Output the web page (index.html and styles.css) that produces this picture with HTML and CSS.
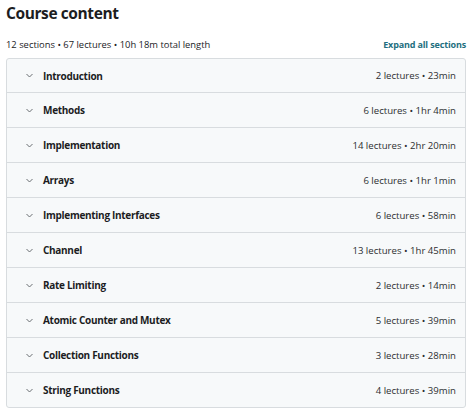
FILE: index.html
```html
<!DOCTYPE html>
<html>
<head>
<meta charset="utf-8">
<link rel="stylesheet" href="styles.css">
</head>
<body>
<div class="page">
  <h2 class="title">Course content</h2>
  <div class="meta">
    <span class="stats">12 sections • 67 lectures • 10h 18m total length</span>
    <span class="expand">Expand all sections</span>
  </div>
  <div class="sections">
    <div class="row"><span class="chev"><svg width="7" height="5" viewBox="0 0 7 5"><path d="M0.5 1 L3.5 4 L6.5 1" fill="none" stroke="#6a6f73" stroke-width="1"/></svg></span><span class="name">Introduction</span><span class="info">2 lectures • 23min</span></div>
    <div class="row"><span class="chev"><svg width="7" height="5" viewBox="0 0 7 5"><path d="M0.5 1 L3.5 4 L6.5 1" fill="none" stroke="#6a6f73" stroke-width="1"/></svg></span><span class="name">Methods</span><span class="info">6 lectures • 1hr 4min</span></div>
    <div class="row"><span class="chev"><svg width="7" height="5" viewBox="0 0 7 5"><path d="M0.5 1 L3.5 4 L6.5 1" fill="none" stroke="#6a6f73" stroke-width="1"/></svg></span><span class="name">Implementation</span><span class="info">14 lectures • 2hr 20min</span></div>
    <div class="row"><span class="chev"><svg width="7" height="5" viewBox="0 0 7 5"><path d="M0.5 1 L3.5 4 L6.5 1" fill="none" stroke="#6a6f73" stroke-width="1"/></svg></span><span class="name">Arrays</span><span class="info">6 lectures • 1hr 1min</span></div>
    <div class="row"><span class="chev"><svg width="7" height="5" viewBox="0 0 7 5"><path d="M0.5 1 L3.5 4 L6.5 1" fill="none" stroke="#6a6f73" stroke-width="1"/></svg></span><span class="name">Implementing Interfaces</span><span class="info">6 lectures • 58min</span></div>
    <div class="row"><span class="chev"><svg width="7" height="5" viewBox="0 0 7 5"><path d="M0.5 1 L3.5 4 L6.5 1" fill="none" stroke="#6a6f73" stroke-width="1"/></svg></span><span class="name">Channel</span><span class="info">13 lectures • 1hr 45min</span></div>
    <div class="row"><span class="chev"><svg width="7" height="5" viewBox="0 0 7 5"><path d="M0.5 1 L3.5 4 L6.5 1" fill="none" stroke="#6a6f73" stroke-width="1"/></svg></span><span class="name">Rate Limiting</span><span class="info">2 lectures • 14min</span></div>
    <div class="row"><span class="chev"><svg width="7" height="5" viewBox="0 0 7 5"><path d="M0.5 1 L3.5 4 L6.5 1" fill="none" stroke="#6a6f73" stroke-width="1"/></svg></span><span class="name">Atomic Counter and Mutex</span><span class="info">5 lectures • 39min</span></div>
    <div class="row"><span class="chev"><svg width="7" height="5" viewBox="0 0 7 5"><path d="M0.5 1 L3.5 4 L6.5 1" fill="none" stroke="#6a6f73" stroke-width="1"/></svg></span><span class="name">Collection Functions</span><span class="info">3 lectures • 28min</span></div>
    <div class="row"><span class="chev"><svg width="7" height="5" viewBox="0 0 7 5"><path d="M0.5 1 L3.5 4 L6.5 1" fill="none" stroke="#6a6f73" stroke-width="1"/></svg></span><span class="name">String Functions</span><span class="info">4 lectures • 39min</span></div>
  </div>
</div>
</body>
</html>
```
FILE: styles.css
```css
html, body {
  margin: 0;
  padding: 0;
  background: #ffffff;
}
body {
  font-family: "Open Sans", "Noto Sans", sans-serif;
  color: #1c1d1f;
}
.page {
  padding: 3px 8px 0 6px;
}
.title {
  margin: 0;
  font-size: 15.5px;
  font-weight: 700;
  line-height: 21px;
  letter-spacing: -0.4px;
}
.meta {
  display: flex;
  justify-content: space-between;
  align-items: center;
  margin-top: 12px;
  height: 16px;
  margin-bottom: 6px;
}
.stats {
  font-size: 9.4px;
  letter-spacing: 0;
}
.expand {
  font-size: 9px;
  font-weight: 700;
  color: #1f6f80;
  letter-spacing: -0.15px;
}
.sections {
  border: 1px solid #d8dcdf;
  border-radius: 3px;
  background: #f7f9fa;
}
.row {
  display: flex;
  align-items: center;
  height: 34px;
  border-top: 1px solid #d8dcdf;
  padding: 0 9px 0 19px;
}
.row:first-child {
  border-top: none;
  height: 33px;
}
.chev {
  display: flex;
  width: 17px;
}
.name {
  flex: 1;
  font-size: 10px;
  font-weight: 700;
  letter-spacing: -0.3px;
}
.info {
  font-size: 9.6px;
  color: #2d2f31;
  letter-spacing: 0;
}
```
